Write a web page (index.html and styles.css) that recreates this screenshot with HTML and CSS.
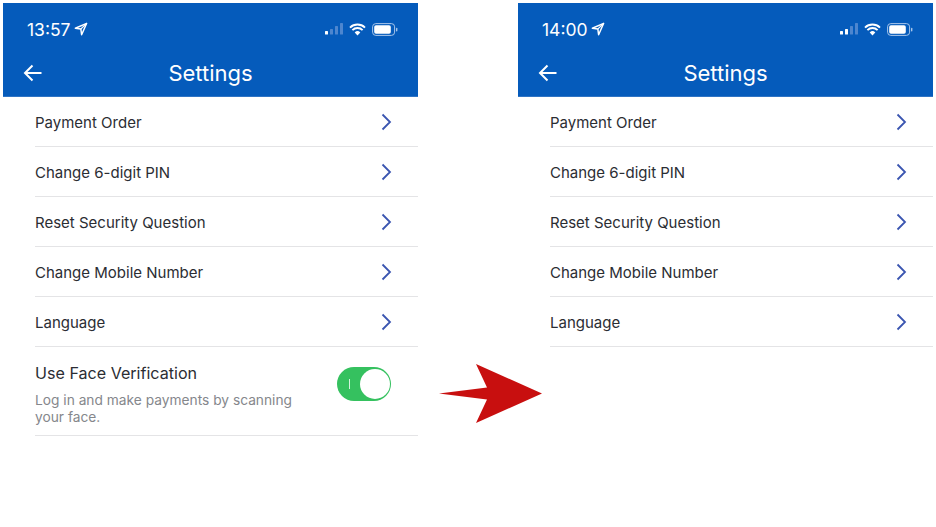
FILE: index.html
```html
<!DOCTYPE html>
<html lang="en">
<head>
    <meta charset="UTF-8">
    <meta name="viewport" content="width=device-width, initial-scale=1.0">
    <title>Settings</title>
    <link rel="stylesheet" href="styles.css">
</head>
<body>
    <div class="screens">
        <section class="phone">
            <header class="app-header">
                <div class="status-bar">
                    <div class="status-left">
                        <span class="clock">13:57</span>
                        <svg class="location" width="14" height="14" viewBox="0 0 16 16"><path d="M14.5 1.5 1.5 7.2l6.3.8.9 6.5z" fill="none" stroke="#fff" stroke-width="1.7" stroke-linejoin="round"/><path d="M14.5 1.5 7.8 8" stroke="#fff" stroke-width="1.2"/></svg>
                    </div>
                    <div class="status-right">
                        <svg width="18" height="12" viewBox="0 0 18 12"><rect x="0" y="8" width="3" height="3.5" rx=".6" fill="#fff"/><rect x="5" y="6" width="3" height="5.5" rx=".6" fill="#4d86cf"/><rect x="10" y="3" width="3" height="8.5" rx=".6" fill="#4d86cf"/><rect x="15" y="0" width="3" height="11.5" rx=".6" fill="#4d86cf"/></svg>
                        <svg width="17" height="13" viewBox="0 0 17 13"><path d="M1 4.6a10.8 10.8 0 0 1 15 0M3.4 7.1a7.4 7.4 0 0 1 10.2 0" fill="none" stroke="#fff" stroke-width="1.9"/><path d="M5.7 9.4a4 4 0 0 1 5.6 0L8.5 12.4z" fill="#fff"/></svg>
                        <svg width="26" height="13" viewBox="0 0 26 13"><rect x=".6" y=".6" width="22" height="11.8" rx="3.2" fill="none" stroke="#a9c6ea" stroke-width="1"/><rect x="2.2" y="2.2" width="16.6" height="8.6" rx="1.8" fill="#fff"/><rect x="24" y="4.8" width="1.4" height="3.6" rx=".7" fill="#a9c6ea"/></svg>
                    </div>
                </div>
                <div class="nav-bar">
                    <svg class="back" width="20" height="18" viewBox="0 0 20 18"><path d="M18.5 9H2M9.5 1.5 2 9l7.5 7.5" fill="none" stroke="#fff" stroke-width="2"/></svg>
                    <h1>Settings</h1>
                </div>
            </header>
            <ul class="menu">
                <li class="menu-row"><span>Payment Order</span><svg class="chevron" width="11" height="18" viewBox="0 0 11 18"><path d="M1.5 1.5 9 9l-7.5 7.5" /></svg></li>
                <li class="menu-row"><span>Change 6-digit PIN</span><svg class="chevron" width="11" height="18" viewBox="0 0 11 18"><path d="M1.5 1.5 9 9l-7.5 7.5" /></svg></li>
                <li class="menu-row"><span>Reset Security Question</span><svg class="chevron" width="11" height="18" viewBox="0 0 11 18"><path d="M1.5 1.5 9 9l-7.5 7.5" /></svg></li>
                <li class="menu-row"><span>Change Mobile Number</span><svg class="chevron" width="11" height="18" viewBox="0 0 11 18"><path d="M1.5 1.5 9 9l-7.5 7.5" /></svg></li>
                <li class="menu-row"><span>Language</span><svg class="chevron" width="11" height="18" viewBox="0 0 11 18"><path d="M1.5 1.5 9 9l-7.5 7.5" /></svg></li>
                <li class="face-row">
                    <div class="face-text">
                        <div class="face-title">Use Face Verification</div>
                        <div class="face-desc">Log in and make payments by scanning your face.</div>
                    </div>
                    <div class="toggle"><span class="toggle-mark"></span><span class="toggle-knob"></span></div>
                </li>
            </ul>
        </section>

        <section class="phone">
            <header class="app-header">
                <div class="status-bar">
                    <div class="status-left">
                        <span class="clock">14:00</span>
                        <svg class="location" width="14" height="14" viewBox="0 0 16 16"><path d="M14.5 1.5 1.5 7.2l6.3.8.9 6.5z" fill="none" stroke="#fff" stroke-width="1.7" stroke-linejoin="round"/><path d="M14.5 1.5 7.8 8" stroke="#fff" stroke-width="1.2"/></svg>
                    </div>
                    <div class="status-right">
                        <svg width="18" height="12" viewBox="0 0 18 12"><rect x="0" y="8" width="3" height="3.5" rx=".6" fill="#fff"/><rect x="5" y="6" width="3" height="5.5" rx=".6" fill="#fff"/><rect x="10" y="3" width="3" height="8.5" rx=".6" fill="#4d86cf"/><rect x="15" y="0" width="3" height="11.5" rx=".6" fill="#4d86cf"/></svg>
                        <svg width="17" height="13" viewBox="0 0 17 13"><path d="M1 4.6a10.8 10.8 0 0 1 15 0M3.4 7.1a7.4 7.4 0 0 1 10.2 0" fill="none" stroke="#fff" stroke-width="1.9"/><path d="M5.7 9.4a4 4 0 0 1 5.6 0L8.5 12.4z" fill="#fff"/></svg>
                        <svg width="26" height="13" viewBox="0 0 26 13"><rect x=".6" y=".6" width="22" height="11.8" rx="3.2" fill="none" stroke="#a9c6ea" stroke-width="1"/><rect x="2.2" y="2.2" width="16.6" height="8.6" rx="1.8" fill="#fff"/><rect x="24" y="4.8" width="1.4" height="3.6" rx=".7" fill="#a9c6ea"/></svg>
                    </div>
                </div>
                <div class="nav-bar">
                    <svg class="back" width="20" height="18" viewBox="0 0 20 18"><path d="M18.5 9H2M9.5 1.5 2 9l7.5 7.5" fill="none" stroke="#fff" stroke-width="2"/></svg>
                    <h1>Settings</h1>
                </div>
            </header>
            <ul class="menu">
                <li class="menu-row"><span>Payment Order</span><svg class="chevron" width="11" height="18" viewBox="0 0 11 18"><path d="M1.5 1.5 9 9l-7.5 7.5" /></svg></li>
                <li class="menu-row"><span>Change 6-digit PIN</span><svg class="chevron" width="11" height="18" viewBox="0 0 11 18"><path d="M1.5 1.5 9 9l-7.5 7.5" /></svg></li>
                <li class="menu-row"><span>Reset Security Question</span><svg class="chevron" width="11" height="18" viewBox="0 0 11 18"><path d="M1.5 1.5 9 9l-7.5 7.5" /></svg></li>
                <li class="menu-row"><span>Change Mobile Number</span><svg class="chevron" width="11" height="18" viewBox="0 0 11 18"><path d="M1.5 1.5 9 9l-7.5 7.5" /></svg></li>
                <li class="menu-row"><span>Language</span><svg class="chevron" width="11" height="18" viewBox="0 0 11 18"><path d="M1.5 1.5 9 9l-7.5 7.5" /></svg></li>
            </ul>
        </section>

        <svg class="big-arrow" width="104" height="60" viewBox="0 0 104 60"><path d="M0 29.5 48 23.5 37 0 103 29.5 37 59 48 35.5z" fill="#c80f0f"/></svg>
    </div>
</body>
</html>
```

FILE: styles.css
```css
* {
    box-sizing: border-box;
}
body {
    margin: 0;
    background-color: #ffffff;
    font-family: Inter, "Noto Sans", sans-serif;
    color: #2b2d33;
}
.screens {
    display: flex;
    gap: 100px;
    padding: 3px;
    height: 527px;
    overflow: hidden;
}
.phone {
    width: 415px;
}

/* blue header */
.app-header {
    height: 94px;
    background-color: #055bbb;
    border-bottom: 1px solid #2f74c4;
    color: white;
    padding: 16px 20px 0 24px;
}
.status-bar {
    display: flex;
    justify-content: space-between;
    align-items: center;
    height: 20px;
}
.status-left {
    display: flex;
    align-items: center;
    gap: 3px;
}
.clock {
    font-size: 17.5px;
}
.status-right {
    display: flex;
    align-items: center;
    gap: 6px;
}
.nav-bar {
    position: relative;
    display: flex;
    justify-content: center;
    align-items: center;
    height: 30px;
    margin-top: 19px;
    margin-left: -24px;
    margin-right: -20px;
}
.nav-bar h1 {
    margin: 0;
    font-size: 22px;
    font-weight: 400;
}
.back {
    position: absolute;
    left: 20px;
    top: 6px;
}

/* settings list */
.menu {
    list-style: none;
    margin: 0;
    padding: 0 0 0 32px;
}
.menu-row {
    display: flex;
    justify-content: space-between;
    align-items: center;
    height: 50px;
    padding-right: 26px;
    border-bottom: 1px solid #e4e4e6;
    font-size: 15px;
}
.menu-row span {
    margin-top: 1px;
}
.chevron {
    fill: none;
    stroke: #3a55b0;
    stroke-width: 1.8;
}
.face-row {
    display: flex;
    justify-content: space-between;
    align-items: flex-start;
    height: 89px;
    padding: 17px 27px 0 0;
    border-bottom: 1px solid #e4e4e6;
}
.face-text {
    width: 270px;
}
.face-title {
    font-size: 16.1px;
    line-height: 19px;
    margin-bottom: 9px;
}
.face-desc {
    font-size: 13.75px;
    line-height: 17px;
    color: #85878c;
}
.toggle {
    display: flex;
    justify-content: space-between;
    align-items: center;
    width: 54px;
    height: 34px;
    margin-top: 3px;
    padding: 0 1px 0 12px;
    border-radius: 17px;
    background-color: #35c15f;
}
.toggle-mark {
    width: 1px;
    height: 10px;
    background-color: #d5f3de;
}
.toggle-knob {
    width: 30px;
    height: 30px;
    border-radius: 50%;
    background-color: #ffffff;
}

/* red arrow between the two screens */
.big-arrow {
    position: absolute;
    left: 439px;
    top: 364px;
}
```
